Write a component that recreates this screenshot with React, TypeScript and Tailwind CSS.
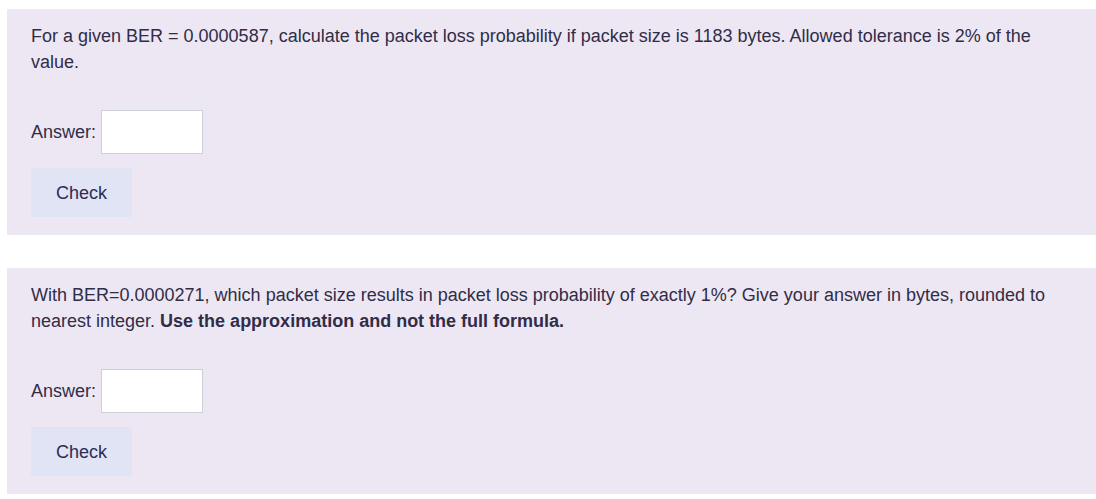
export default function App() {
  const Panel = ({ children }: { children: React.ReactNode }) => (
    <div className="ml-[7px] bg-[#ede7f3] pl-[24px] pr-[40px] pt-[14px] pb-[18px]">{children}</div>
  );
  const AnswerBlock = () => (
    <>
      <div className="mt-[35px] flex items-center">
        <span className="mr-[5px]">Answer:</span>
        <input type="text" className="h-[44px] w-[102px] border border-[#ced0d8] bg-white outline-none" />
      </div>
      <button className="mt-[14px] block h-[49px] w-[101px] bg-[#e1e4f4] text-[#2b2d55]">Check</button>
    </>
  );
  return (
    <div className="bg-white pt-[9px] min-h-[499px] text-[18px] leading-[26px] text-[#302d48]" style={{ fontFamily: '"Liberation Sans", Arial, sans-serif' }}>
      <Panel>
        <p>
          For a given BER = 0.0000587, calculate the packet loss probability if packet size is 1183 bytes. Allowed tolerance is 2% of the value.
        </p>
        <AnswerBlock />
      </Panel>
      <div className="h-[33px]" />
      <Panel>
        <p>
          With BER=0.0000271, which packet size results in packet loss probability of exactly 1%? Give your answer in bytes, rounded to nearest integer. <b>Use the approximation and not the full formula.</b>
        </p>
        <AnswerBlock />
      </Panel>
    </div>
  );
}
